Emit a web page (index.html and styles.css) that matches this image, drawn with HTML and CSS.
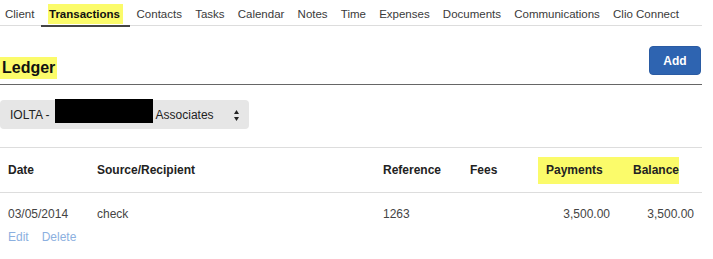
FILE: index.html
```html
<!DOCTYPE html>
<html>
<head>
<meta charset="utf-8">
<link rel="stylesheet" href="styles.css">
</head>
<body>
<div class="page">
  <nav class="tabs">
    <span class="tab first">Client</span>
    <span class="tab active"><span class="hl">Transactions</span></span>
    <span class="tab">Contacts</span>
    <span class="tab">Tasks</span>
    <span class="tab">Calendar</span>
    <span class="tab">Notes</span>
    <span class="tab">Time</span>
    <span class="tab">Expenses</span>
    <span class="tab">Documents</span>
    <span class="tab">Communications</span>
    <span class="tab">Clio Connect</span>
  </nav>

  <div class="header">
    <h1 class="title">Ledger</h1>
    <button class="add">Add</button>
  </div>

  <div class="select">
    <span>IOLTA -</span>
    <span class="redact"></span>
    <span>Associates</span>
    <svg class="arrows" width="5" height="11" viewBox="0 0 5 11"><path d="M2.5 0 L5 4 L0 4 Z M0 7 L5 7 L2.5 11 Z" fill="#222"/></svg>
  </div>

  <div class="table">
    <div class="row head">
      <div class="cell">Date</div>
      <div class="cell">Source/Recipient</div>
      <div class="cell">Reference</div>
      <div class="cell">Fees</div>
      <div class="cell hlcell">Payments</div>
      <div class="cell"><span class="hlspan">Balance</span></div>
    </div>
    <div class="row body">
      <div class="cell">
        <div>03/05/2014</div>
        <div class="actions"><span>Edit</span><span>Delete</span></div>
      </div>
      <div class="cell">check</div>
      <div class="cell">1263</div>
      <div class="cell"></div>
      <div class="cell num pay">3,500.00</div>
      <div class="cell num">3,500.00</div>
    </div>
  </div>
</div>
</body>
</html>
```

FILE: styles.css
```css
html, body {
  margin: 0;
  padding: 0;
  background: #fff;
}
body {
  font-family: "Liberation Sans", Arial, sans-serif;
  font-size: 12px;
  color: #444;
}
.page {
  width: 702px;
}
.tabs {
  display: flex;
  height: 25px;
  border-bottom: 1px solid #ddd;
  font-size: 11.5px;
}
.tab {
  position: relative;
  display: flex;
  align-items: center;
  padding: 3px 6.6px 0;
  height: 22px;
  color: #3a3a3a;
  white-space: nowrap;
}
.tab.first {
  padding-left: 5px;
}
.tab.active {
  color: #111;
  font-weight: bold;
  padding: 3px 7px 0;
}
.tab.active::after {
  content: "";
  position: absolute;
  left: 0;
  right: 0;
  bottom: -2px;
  height: 2px;
  background: #444;
}
.hl {
  background: #fbfb6a;
  padding: 3px 3px 3px 1px;
  line-height: 14px;
}
.header {
  margin-top: 19px;
  height: 39px;
  display: flex;
  justify-content: space-between;
  align-items: flex-start;
  border-bottom: 1px solid #666;
}
.title {
  margin: 12px 0 0;
  font-size: 16px;
  font-weight: bold;
  line-height: 22px;
  color: #111;
  background: #fbfb6a;
  padding: 0 2px;
}
.add {
  margin: 1px 1px 0 0;
  width: 52px;
  height: 29px;
  background: #2e64b1;
  border: 1px solid #2a5ba3;
  border-radius: 4px;
  color: #fff;
  font-family: "Liberation Sans", Arial, sans-serif;
  font-weight: bold;
  font-size: 12px;
  padding: 0;
}
.select {
  margin-top: 15px;
  width: 239px;
  height: 29px;
  padding-left: 10px;
  background: #e6e6e6;
  border-radius: 4px;
  display: flex;
  align-items: center;
  color: #222;
}
.redact {
  display: inline-block;
  width: 98px;
  height: 24px;
  background: #000;
  margin: -1px 3px 0 5px;
  align-self: flex-start;
}
.arrows {
  margin-left: auto;
  margin-right: 10px;
  margin-top: 1px;
}
.table {
  margin-top: 18px;
  border-top: 1px solid #ddd;
}
.row {
  display: grid;
  grid-template-columns: 89px 286px 87px 76px 87px 77px;
}
.row.head {
  height: 44px;
  border-bottom: 1px solid #ddd;
  align-items: center;
  font-weight: bold;
  color: #222;
}
.cell {
  padding-left: 8px;
  line-height: 16px;
}
.hlcell {
  background: #fbfb6a;
  height: 27px;
  line-height: 27px;
}
.row.head .cell:last-child {
  padding-left: 0;
}
.hlspan {
  display: block;
  width: 44px;
  height: 27px;
  line-height: 27px;
  padding: 0 2px 0 8px;
  background: #fbfb6a;
}
.row.body .cell {
  padding-top: 13px;
}
.num {
  text-align: right;
  padding-left: 0;
  padding-right: 8px;
}
.num.pay {
  padding-right: 15px;
}
.actions {
  margin-top: 7px;
  color: #8cb0e0;
  display: flex;
  gap: 13px;
}
```
